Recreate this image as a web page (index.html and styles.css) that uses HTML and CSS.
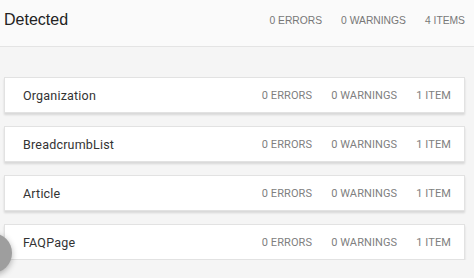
FILE: index.html
```html
<!DOCTYPE html>
<html lang="en">
<head>
    <meta charset="UTF-8">
    <title>Detected</title>
    <link rel="stylesheet" href="styles.css">
</head>
<body>
    <div class="header">
        <h1>Detected</h1>
        <div class="counts">
            <span>0 ERRORS</span>
            <span>0 WARNINGS</span>
            <span>4 ITEMS</span>
        </div>
    </div>

    <div class="list">
        <div class="card">
            <span class="name">Organization</span>
            <div class="stats">
                <span>0 ERRORS</span>
                <span>0 WARNINGS</span>
                <span>1 ITEM</span>
            </div>
        </div>
        <div class="card">
            <span class="name">BreadcrumbList</span>
            <div class="stats">
                <span>0 ERRORS</span>
                <span>0 WARNINGS</span>
                <span>1 ITEM</span>
            </div>
        </div>
        <div class="card">
            <span class="name">Article</span>
            <div class="stats">
                <span>0 ERRORS</span>
                <span>0 WARNINGS</span>
                <span>1 ITEM</span>
            </div>
        </div>
        <div class="card">
            <span class="name">FAQPage</span>
            <div class="stats">
                <span>0 ERRORS</span>
                <span>0 WARNINGS</span>
                <span>1 ITEM</span>
            </div>
        </div>
    </div>

    <div class="fab"></div>
</body>
</html>
```

FILE: styles.css
```css
body {
    margin: 0;
    background-color: #f5f5f5;
    font-family: 'Roboto', sans-serif;
    overflow: hidden;
}

.header {
    display: flex;
    align-items: center;
    justify-content: space-between;
    height: 46px;
    padding: 0 9px 0 4px;
    background-color: #fafafa;
    border-bottom: 1px solid #e4e4e4;
}

.header h1 {
    margin: 0 0 6px;
    font-family: 'Liberation Sans', Arial, sans-serif;
    font-weight: 400;
    font-size: 16px;
    color: #222;
}

.counts {
    display: flex;
    gap: 19px;
    margin-bottom: 6px;
    font-family: 'Liberation Sans', Arial, sans-serif;
    font-size: 10.3px;
    color: #777;
}

.list {
    display: flex;
    flex-direction: column;
    gap: 13px;
    padding: 30px 9px 0 4px;
}

.card {
    display: flex;
    align-items: center;
    justify-content: space-between;
    height: 34px;
    padding: 0 13px 0 18px;
    background-color: #fff;
    border: 1px solid #e2e2e2;
    box-shadow: 0 2px 2px rgba(0, 0, 0, 0.12);
}

.name {
    font-size: 12.5px;
    color: #333;
    letter-spacing: 0.2px;
}

.stats {
    display: flex;
    gap: 19px;
    font-size: 11px;
    color: #808080;
    letter-spacing: 0.1px;
}

.fab {
    position: absolute;
    left: -28px;
    top: 233px;
    width: 40px;
    height: 40px;
    border-radius: 50%;
    background-color: #9e9e9e;
    box-shadow: 0 2px 6px rgba(0, 0, 0, 0.3);
}
```
